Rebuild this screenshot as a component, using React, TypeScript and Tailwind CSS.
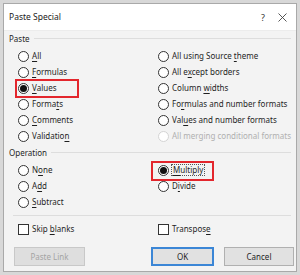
import React from 'react';

type Opt = { label: string; u?: number; checked?: boolean; disabled?: boolean };

function Label({ text, u }: { text: string; u?: number }) {
  if (u === undefined) return <>{text}</>;
  return (
    <>
      {text.slice(0, u)}
      <span className="underline underline-offset-[2px]">{text[u]}</span>
      {text.slice(u + 1)}
    </>
  );
}

function Radio({ label, u, checked, disabled }: Opt) {
  return (
    <div className={`flex items-center h-[16px] ${disabled ? 'text-[#b0b0b0]' : 'text-[#1f1f1f]'}`}>
      <span
        className={`w-[11px] h-[11px] rounded-full border flex items-center justify-center shrink-0 bg-white ${
          disabled ? 'border-[#d4d4d4]' : 'border-[#333]'
        }`}
      >
        {checked && <span className="w-[7px] h-[7px] rounded-full bg-[#111]" />}
      </span>
      <span className="ml-[3px] whitespace-nowrap">
        <Label text={label} u={u} />
      </span>
    </div>
  );
}

function Group({ title }: { title: string }) {
  return (
    <div className="flex items-center h-[15px]">
      <span className="text-[#1f1f1f]">{title}</span>
      <div className="flex-1 h-px bg-[#dddddd] ml-[4px] mr-[3px]" />
    </div>
  );
}

function Check({ label, u }: Opt) {
  return (
    <div className="flex items-center h-[16px] text-[#1f1f1f]">
      <span className="w-[11px] h-[11px] border border-[#333] bg-white shrink-0" />
      <span className="ml-[3px] whitespace-nowrap">
        <Label text={label} u={u} />
      </span>
    </div>
  );
}

const pasteLeft: Opt[] = [
  { label: 'All', u: 0 },
  { label: 'Formulas', u: 0 },
  { label: 'Values', u: 0, checked: true },
  { label: 'Formats', u: 5 },
  { label: 'Comments', u: 0 },
  { label: 'Validation', u: 9 },
];

const pasteRight: Opt[] = [
  { label: 'All using Source theme', u: 17 },
  { label: 'All except borders', u: 5 },
  { label: 'Column widths', u: 7 },
  { label: 'Formulas and number formats', u: 2 },
  { label: 'Values and number formats', u: 3 },
  { label: 'All merging conditional formats', disabled: true },
];

export default function App() {
  return (
    <div
      className="w-[300px] h-[275px] bg-[#d8d8d8] pt-[3px] pl-[3px] text-[8px] leading-none"
      style={{ fontFamily: '"Noto Sans", "Open Sans", sans-serif' }}
    >
      <div className="relative w-[294px] h-[269px] border border-[#a9a9a9] bg-[#f3f3f3] flex flex-col">
        {/* Title bar */}
        <div className="h-[27px] bg-white flex items-center pl-[5px] pr-[6px] border-b border-[#ececec]">
          <span className="text-[8.5px] text-[#1a1a1a]">Paste Special</span>
          <span className="ml-auto text-[9px] text-[#333] mr-[13px]">?</span>
          <svg width="9" height="9" viewBox="0 0 9 9" className="mr-[3px]">
            <path d="M0.5 0.5 L8.5 8.5 M8.5 0.5 L0.5 8.5" stroke="#444" strokeWidth="0.9" />
          </svg>
        </div>

        <div className="pl-[5px] pr-[2px] flex flex-col">
          <Group title="Paste" />
          <div className="mt-[2px] grid grid-cols-[140px_1fr] pl-[9px]">
            <div className="flex flex-col">
              {pasteLeft.map((o) => (
                <Radio key={o.label} {...o} />
              ))}
            </div>
            <div className="flex flex-col">
              {pasteRight.map((o) => (
                <Radio key={o.label} {...o} />
              ))}
            </div>
          </div>

          <div className="mt-[1px]">
            <Group title="Operation" />
          </div>
          <div className="mt-[2px] grid grid-cols-[140px_1fr] pl-[9px]">
            <div className="flex flex-col">
              <Radio label="None" u={1} />
              <Radio label="Add" u={1} />
              <Radio label="Subtract" u={0} />
            </div>
            <div className="flex flex-col">
              <div className="flex items-center h-[16px] text-[#1f1f1f]">
                <span className="w-[11px] h-[11px] rounded-full border border-[#333] flex items-center justify-center bg-white">
                  <span className="w-[7px] h-[7px] rounded-full bg-[#111]" />
                </span>
                <span className="ml-[2px] px-[1px] border border-dotted border-[#555] leading-[10px]">
                  <Label text="Multiply" u={0} />
                </span>
              </div>
              <Radio label="Divide" u={1} />
            </div>
          </div>

          <div className="mt-[5px] h-px bg-[#dddddd] ml-[4px] mr-[3px]" />

          <div className="mt-[5px] grid grid-cols-[140px_1fr] pl-[9px]">
            <Check label="Skip blanks" u={5} />
            <Check label="Transpose" u={8} />
          </div>

          <div className="mt-[10px] flex items-center">
            <div className="ml-[5px] w-[71px] h-[19px] border border-[#c8c8c8] bg-[#dedede] text-[#a4a4a4] flex items-center justify-center">
              Paste Link
            </div>
            <div className="ml-[66px] w-[63px] h-[19px] border-2 border-[#3b86d6] bg-[#e1e1e1] flex items-center justify-center text-[#1f1f1f]">
              OK
            </div>
            <div className="ml-[10px] w-[70px] h-[19px] border border-[#b0b0b0] bg-[#e1e1e1] flex items-center justify-center text-[#1f1f1f]">
              Cancel
            </div>
          </div>
        </div>

        {/* red annotation boxes */}
        <div className="absolute left-[11px] top-[75px] w-[64px] h-[19px] border-2 border-[#e3262d]" />
        <div className="absolute left-[147px] top-[157px] w-[63px] h-[20px] border-2 border-[#e3262d]" />
      </div>
    </div>
  );
}
